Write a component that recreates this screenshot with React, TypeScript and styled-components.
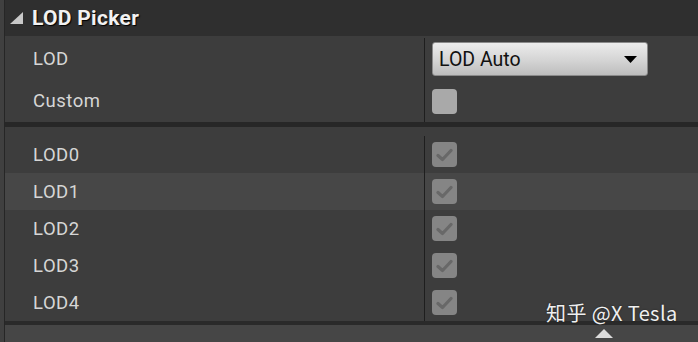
import React from "react";
import styled, { createGlobalStyle } from "styled-components";

const Global = createGlobalStyle`
  html, body { margin: 0; padding: 0; background: #3d3d3d; }
  body { font-family: Roboto, "Noto Sans", sans-serif; }
`;

const Frame = styled.div`
  width: 698px;
  height: 342px;
  display: flex;
  background: #3d3d3d;
  overflow: hidden;
  position: relative;
`;

const Edge = styled.div`
  width: 4px;
  flex: none;
  background: #404040;
  border-right: 1px solid #262626;
`;

const Main = styled.div`
  flex: 1;
  display: flex;
  flex-direction: column;
`;

const Header = styled.div`
  height: 36px;
  flex: none;
  background: #2f2f2f;
  display: flex;
  align-items: center;
  gap: 8px;
  padding-left: 5px;
`;

const Title = styled.span`
  color: #f2f2f2;
  font-weight: 700;
  font-size: 21px;
  letter-spacing: 0.3px;
  text-shadow: 1px 1px 1px #000;
`;

const Section = styled.div<{ $pt?: number }>`
  background: #3d3d3d;
  padding-top: ${(p) => p.$pt ?? 0}px;
  display: flex;
  flex-direction: column;
`;

const Gap = styled.div<{ $h: number }>`
  height: ${(p) => p.$h}px;
  background: #272727;
  flex: none;
`;

const Row = styled.div<{ $h: number; $hl?: boolean }>`
  height: ${(p) => p.$h}px;
  display: grid;
  grid-template-columns: 420px 1fr;
  background: ${(p) => (p.$hl ? "#474747" : "transparent")};
`;

const Label = styled.div`
  display: flex;
  align-items: center;
  padding-left: 28px;
  color: #d6d6d6;
  font-size: 18.5px;
  letter-spacing: 0.5px;
  border-right: 1px solid #1e1e1e;
`;

const Value = styled.div`
  display: flex;
  align-items: center;
  padding-left: 7px;
`;

const Combo = styled.div`
  width: 216px;
  height: 34px;
  box-sizing: border-box;
  border-radius: 3px;
  background: linear-gradient(#ececec, #d4d4d4 55%, #bdbdbd);
  border: 1px solid #8a8a8a;
  display: flex;
  align-items: center;
  justify-content: space-between;
  padding: 0 10px 0 6px;
  color: #111;
  font-size: 19.5px;
`;

const Box = styled.div<{ $light?: boolean }>`
  width: 25px;
  height: 25px;
  border-radius: 4px;
  background: ${(p) => (p.$light ? "#a9a9a9" : "#858585")};
  display: flex;
  align-items: center;
  justify-content: center;
`;

const Footer = styled.div`
  flex: 1;
  border-top: 4px solid #2a2a2a;
  background: #464646;
  display: flex;
  padding-left: 590px;
  padding-top: 4px;
  box-sizing: border-box;
`;

const Watermark = styled.div`
  position: absolute;
  left: 546px;
  top: 298px;
  color: #f0f0f0;
  font-size: 20px;
  letter-spacing: 0.4px;
  font-family: "Noto Sans CJK SC", "Noto Sans", sans-serif;
  text-shadow: 0 0 2px rgba(0,0,0,0.5);
`;

const Check = () => (
  <svg width="17" height="14" viewBox="0 0 17 14">
    <path d="M2 7.5 L6.5 11.5 L15 2.5" fill="none" stroke="#686868" strokeWidth="3.2" strokeLinecap="round" strokeLinejoin="round" />
  </svg>
);

const lods = ["LOD0", "LOD1", "LOD2", "LOD3", "LOD4"];

export default function App() {
  return (
    <Frame>
      <Global />
      <Edge />
      <Main>
        <Header>
          <svg width="14" height="13" viewBox="0 0 14 13">
            <polygon points="0,12 13,12 13,0" fill="#c8c8c8" />
          </svg>
          <Title>LOD Picker</Title>
        </Header>
        <Section $pt={2}>
          <Row $h={42}>
            <Label>LOD</Label>
            <Value>
              <Combo>
                <span>LOD Auto</span>
                <svg width="13" height="7" viewBox="0 0 13 7">
                  <polygon points="0,0 13,0 6.5,7" fill="#000" />
                </svg>
              </Combo>
            </Value>
          </Row>
          <Row $h={42}>
            <Label>Custom</Label>
            <Value>
              <Box $light />
            </Value>
          </Row>
        </Section>
        <Gap $h={5} />
        <Section $pt={9}>
          {lods.map((l, i) => (
            <Row key={l} $h={37} $hl={i === 1}>
              <Label>{l}</Label>
              <Value>
                <Box>
                  <Check />
                </Box>
              </Value>
            </Row>
          ))}
        </Section>
        <Footer>
          <svg width="18" height="9" viewBox="0 0 18 9">
            <polygon points="0,9 18,9 9,0" fill="#dcdcdc" />
          </svg>
        </Footer>
      </Main>
      <Watermark>知乎 @X Tesla</Watermark>
    </Frame>
  );
}
